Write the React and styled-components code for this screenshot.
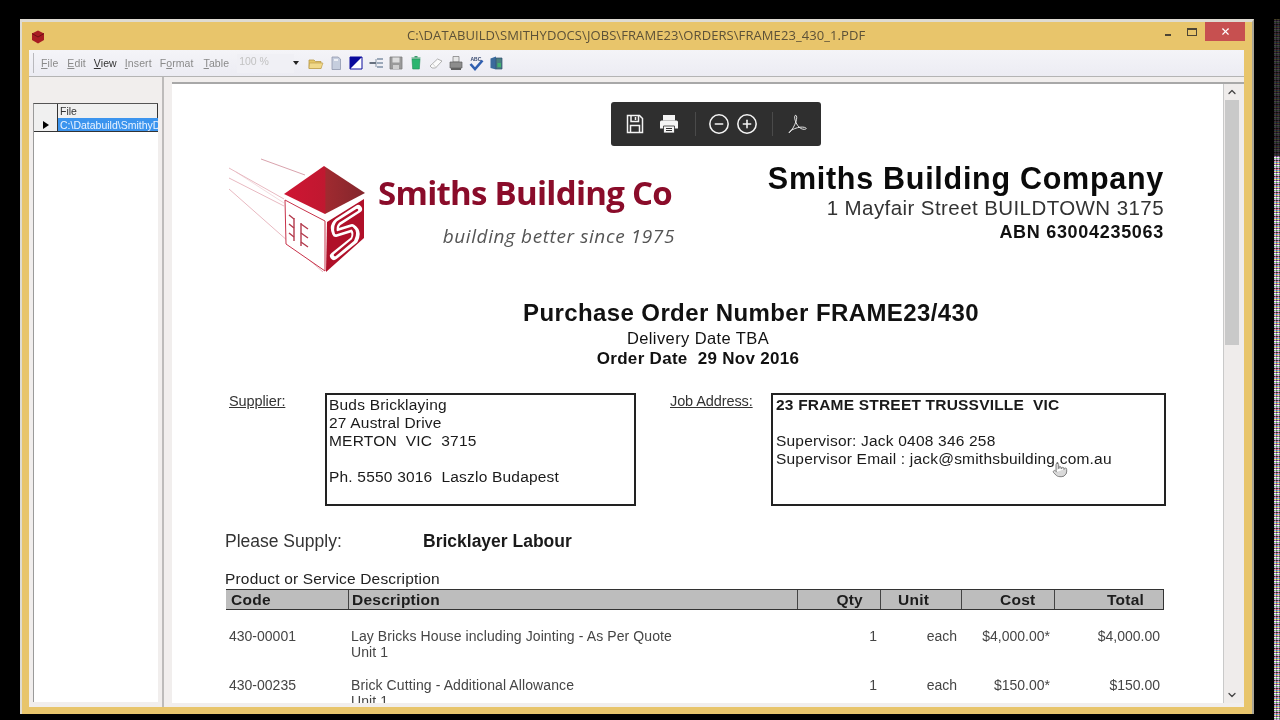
import React from "react";
import styled, { createGlobalStyle } from "styled-components";
import { CircleMinus, CirclePlus, Pointer, ChevronUp, ChevronDown, X } from "lucide-react";

const Global = createGlobalStyle`
  html, body { margin: 0; padding: 0; background: #000; }
  body { font-family: "Liberation Sans", Arial, sans-serif; overflow: hidden; }
  * { box-sizing: border-box; }
`;

const Screen = styled.div`
  width: 1280px;
  height: 720px;
  background: #000;
  display: flex;
  padding-top: 19px;
  overflow: hidden;
`;

const Window = styled.div`
  margin-left: 20px;
  width: 1234px;
  height: 695px;
  border-top: 3px solid #dedbd2;
  border-left: 2px solid #dedbd2;
  border-right: 2px solid #a9a596;
  background: #e8c56b;
  display: flex;
  flex-direction: column;
  padding: 0 8px 7px 7px;
  filter: blur(0.3px);
`;

const Noise = styled.div`
  margin-left: 20px;
  width: 6px;
  height: 701px;
  background-color: #555;
  background-image:
    linear-gradient(180deg, rgba(0, 0, 0, 0.72) 0 137px, transparent 137px),
    repeating-linear-gradient(90deg, transparent 0 1px, rgba(255, 255, 255, 0.35) 1px 2px, rgba(0, 0, 0, 0.3) 2px 3px),
    repeating-linear-gradient(0deg, #d8a0e8 0 1px, #6fbf72 1px 2px, #f2f2f2 2px 3px, #7c3f99 3px 4px, #e8d26a 4px 5px, #5fa8d8 5px 6px, #ee7f9c 6px 7px, #3c3c3c 7px 8px);
`;

const TitleBar = styled.div`
  height: 28px;
  display: flex;
  align-items: center;
  position: relative;
  margin-right: -1px;
`;

const AppIcon = styled.svg`
  width: 14px;
  height: 14px;
  margin-left: 2px;
  margin-top: 1px;
`;

const TitleText = styled.div`
  position: absolute;
  left: 378px;
  top: 5px;
  font-family: "Open Sans", sans-serif;
  font-size: 13px;
  line-height: 17px;
  letter-spacing: 0.08px;
  color: #5c5138;
  white-space: nowrap;
`;

const Controls = styled.div`
  margin-left: auto;
  align-self: flex-start;
  display: flex;
  align-items: flex-start;
`;

const MinButton = styled.div`
  width: 6px;
  height: 2px;
  margin-top: 12px;
  background: #4d4534;
`;

const MaxButton = styled.div`
  width: 10px;
  height: 8px;
  margin: 6px 8px 0 16px;
  border: 1px solid #4d4534;
  border-top-width: 2px;
`;

const CloseButton = styled.div`
  width: 40px;
  height: 19px;
  background: #c75050;
  color: #fff;
  display: flex;
  align-items: center;
  justify-content: center;
`;

const Client = styled.div`
  flex: 1;
  min-height: 0;
  display: flex;
  flex-direction: column;
  background: #f1eeed;
`;

const Toolbar = styled.div`
  height: 27px;
  flex: none;
  display: flex;
  align-items: center;
  padding-left: 4px;
  background: linear-gradient(180deg, #f4f4f8, #ececf3);
  border-bottom: 1px solid #b4b4b4;
`;

const Grip = styled.div`
  width: 1px;
  height: 20px;
  background: #b9b9bd;
  margin-right: 7px;
`;

const Menu = styled.span`
  font-size: 10.5px;
  color: ${(p) => (p.$active ? "#333" : "#8a8a8a")};
  margin-right: ${(p) => p.$gap}px;
  letter-spacing: 0.1px;
  white-space: nowrap;
  u { text-underline-offset: 1px; }
`;

const ZoomBox = styled.div`
  width: 57px;
  font-size: 10.5px;
  color: #c2c2c2;
  background: #f0f0f5;
  height: 19px;
  line-height: 15px;
  margin-left: -1px;
  padding-left: 2px;
  margin-right: -1px;
`;

const Caret = styled.div`
  width: 0;
  height: 0;
  margin: 0 9px 0 0;
  border: 3.5px solid transparent;
  border-top: 4px solid #222;
  border-bottom: 0;
`;

const ToolIcons = styled.div`
  display: flex;
  align-items: center;
  gap: 4px;
`;

const ToolSvg = styled.svg`
  width: 16px;
  height: 16px;
  flex: none;
`;

const Main = styled.div`
  flex: 1;
  min-height: 0;
  display: flex;
`;

const Side = styled.aside`
  width: 135px;
  flex: none;
  padding: 26px 4px 5px 4px;
  border-right: 2px solid #bdbbba;
  display: flex;
`;

const FileGrid = styled.div`
  flex: 1;
  background: #fff;
  border-left: 1px solid #9a9a9a;
  border-top: 1px solid #555;
  overflow: hidden;
`;

const GridRow = styled.div`
  display: grid;
  grid-template-columns: 24px 1fr;
  height: ${(p) => p.$h}px;
  border-bottom: 1px solid #333;
  font-size: 10.5px;
  line-height: 14px;
`;

const HeadCell = styled.div`
  background: #f0f0f0;
  border-right: 1px solid #333;
  color: #333;
  padding-left: 2px;
`;

const ArrowCell = styled.div`
  background: #f0f0f0;
  border-right: 1px solid #333;
  display: flex;
  align-items: center;
  justify-content: center;
  &::before {
    content: "";
    border-left: 6px solid #000;
    border-top: 4.5px solid transparent;
    border-bottom: 4.5px solid transparent;
  }
`;

const SelectedCell = styled.div`
  background: #3b94ee;
  color: #eaf3ff;
  padding-left: 2px;
  white-space: nowrap;
  overflow: hidden;
`;

const DocPane = styled.div`
  flex: 1;
  min-width: 0;
  padding: 5px 0 4px 8px;
  display: flex;
`;

const DocFrame = styled.div`
  flex: 1;
  min-width: 0;
  display: flex;
  border-top: 2px solid #a8a8a8;
  position: relative;
  overflow: hidden;
`;

const Sheet = styled.div`
  flex: 1;
  background: #fff;
  border-right: 1px solid #c9c9c9;
  overflow: hidden;
  padding: 72px 0 0 53px;
  color: #111;
`;

const Scroll = styled.div`
  width: 20px;
  flex: none;
  background: #efeceb;
  display: flex;
  flex-direction: column;
  align-items: center;
  color: #444;
  padding-right: 4px;
`;

const ScrollThumb = styled.div`
  width: 14px;
  height: 245px;
  margin-top: 2px;
  background: #c9c9c9;
`;

const ScrollEnd = styled.div`
  margin-top: auto;
  margin-bottom: 2px;
  display: flex;
`;

const ScrollStart = styled.div`
  height: 12px;
  margin-top: 2px;
  display: flex;
`;

const Float = styled.div`
  position: absolute;
  left: 439px;
  top: 18px;
  width: 210px;
  height: 44px;
  background: #2f2f2f;
  border-radius: 3px;
  color: #f4f4f4;
  display: flex;
  align-items: center;
  padding-left: 14px;
`;

const FloatSep = styled.div`
  width: 1px;
  height: 24px;
  background: #4a4a4a;
  margin: 0 ${(p) => p.$right}px 0 ${(p) => p.$left}px;
`;

const FloatSvg = styled.svg`
  width: 20px;
  height: 20px;
  flex: none;
  margin-right: ${(p) => p.$gap || 0}px;
`;

const ZoomSvg = styled.svg`
  width: 22px;
  height: 22px;
  flex: none;
  margin-right: ${(p) => p.$gap || 0}px;
`;

const Cursor = styled.div`
  position: absolute;
  left: 880px;
  top: 378px;
  color: #6e6e6e;
  opacity: 0.85;
  display: flex;
`;

const Header = styled.header`
  width: 940px;
  display: flex;
  justify-content: space-between;
  height: 117px;
`;

const Brand = styled.div`
  display: flex;
  padding-left: 3px;
`;

const LogoMark = styled.svg`
  width: 142px;
  height: 118px;
  flex: none;
`;

const BrandText = styled.div`
  margin-left: 8px;
`;

const BrandName = styled.div`
  font-family: "Open Sans", sans-serif;
  font-weight: 700;
  font-size: 33px;
  line-height: 40px;
  margin-top: 17px;
  letter-spacing: -0.72px;
  color: #8a0c2a;
  white-space: nowrap;
`;

const Tagline = styled.div`
  font-family: "Open Sans", sans-serif;
  font-style: italic;
  font-size: 19px;
  line-height: 26px;
  margin: 10px -3px 0 0;
  text-align: right;
  letter-spacing: 0.6px;
  color: #555;
  white-space: nowrap;
`;

const Company = styled.div`
  text-align: right;
  padding-top: 4px;
  padding-right: 1px;
`;

const CompanyName = styled.div`
  font-size: 30.5px;
  font-weight: 700;
  line-height: 36px;
  letter-spacing: 0.72px;
  color: #0a0a0a;
`;

const CompanyAddress = styled.div`
  font-size: 20.5px;
  line-height: 24px;
  letter-spacing: 0.42px;
  color: #333;
`;

const CompanyAbn = styled.div`
  font-size: 18px;
  font-weight: 700;
  line-height: 24px;
  letter-spacing: 0.7px;
  color: #111;
`;

const CenterBlock = styled.div`
  width: 940px;
  text-align: center;
  padding-left: ${(p) => p.$shift}px;
  font-size: ${(p) => p.$size}px;
  font-weight: ${(p) => (p.$bold ? 700 : 400)};
  line-height: ${(p) => p.$line}px;
  margin-top: ${(p) => p.$top || 0}px;
  letter-spacing: ${(p) => p.$track || 0}px;
  white-space: pre;
`;

const Addresses = styled.section`
  display: grid;
  grid-template-columns: 100px 311px 135px 395px;
  margin-top: 24px;
`;

const AddrLabel = styled.div`
  padding: 0 0 0 ${(p) => p.$pad}px;
  font-size: 14.5px;
  line-height: 16px;
  text-decoration: underline;
  color: #333;
  letter-spacing: -0.1px;
`;

const AddrBox = styled.div`
  height: 113px;
  border: 2px solid #222;
  padding: 1px 0 0 ${(p) => p.$pad}px;
  font-size: 15.5px;
  line-height: 18px;
  white-space: pre;
  color: #1a1a1a;
  letter-spacing: 0.2px;
`;

const Supply = styled.div`
  display: grid;
  grid-template-columns: 198px 1fr;
  margin-top: 24px;
  font-size: 17.5px;
  line-height: 22px;
  color: #333;
  b { color: #1a1a1a; }
`;

const TableCaption = styled.div`
  margin-top: 18px;
  font-size: 15.5px;
  line-height: 18px;
  letter-spacing: 0.18px;
  color: #222;
`;

const Columns = `
  display: grid;
  grid-template-columns: 122px 449px 83px 81px 93px 110px;
  width: 938px;
  margin-left: 1px;
`;

const TableHead = styled.div`
  ${Columns}
  margin-top: 1px;
  height: 21px;
  background: #bdbdbd;
  border-top: 1px solid #333;
  border-bottom: 1px solid #333;
  border-right: 1px solid #333;
`;

const Th = styled.div`
  font-size: 15.5px;
  font-weight: 700;
  line-height: 19px;
  color: #1d1d1d;
  letter-spacing: 0.25px;
  text-align: ${(p) => p.$align || "left"};
  padding: 0 ${(p) => p.$right || 0}px 0 ${(p) => p.$left || 0}px;
  border-left: ${(p) => (p.$first ? "none" : "1px solid #444")};
`;

const TableBody = styled.div`
  padding-top: 18px;
`;

const Row = styled.div`
  ${Columns}
  padding-bottom: 17px;
`;

const Td = styled.div`
  font-size: 14px;
  line-height: 16px;
  color: #454545;
  white-space: pre;
  letter-spacing: ${(p) => p.$track || 0}px;
  text-align: ${(p) => p.$align || "left"};
  padding: 0 ${(p) => p.$right || 0}px 0 ${(p) => p.$left || 0}px;
`;

const rows = [
  { code: "430-00001", desc: "Lay Bricks House including Jointing - As Per Quote\nUnit 1", qty: "1", unit: "each", cost: "$4,000.00*", total: "$4,000.00" },
  { code: "430-00235", desc: "Brick Cutting - Additional Allowance\nUnit 1", qty: "1", unit: "each", cost: "$150.00*", total: "$150.00" },
];

const Logo = () => (
  <LogoMark viewBox="0 0 142 118">
    <defs>
      <linearGradient id="roof" x1="0" x2="1" y1="0" y2="0">
        <stop offset="0" stopColor="#cf1533" />
        <stop offset="0.5" stopColor="#c01830" />
        <stop offset="0.52" stopColor="#a02a30" />
        <stop offset="1" stopColor="#82262c" />
      </linearGradient>
    </defs>
    <g stroke="#e8b9c1" strokeWidth="1" fill="none">
      <path d="M1 12 L56 43" />
      <path d="M1 22 L56 50" />
      <path d="M1 33 L95 116" />
      <path d="M33 3 L77 19" stroke="#d9a3ad" />
      <path d="M8 16 L56 47" opacity="0.5" />
    </g>
    <path d="M96 10 L137 37 L97 58 L56 38 Z" fill="url(#roof)" />
    <path d="M57 44 L72 52 L97 65 L97 115 L58 88 Z" fill="#fff" stroke="#c8324a" strokeWidth="1" />
    <g stroke="#b33a4c" strokeWidth="1.4" fill="none">
      <path d="M73 67 L73 90" />
      <path d="M66 62 L66 85" />
      <path d="M73 68 L80 73 M73 77 L80 82 M73 86 L80 91" />
      <path d="M66 63 L61 59 M66 72 L61 68 M66 81 L61 77" />
    </g>
    <path d="M99 66 L136 43 L136 82 L98 116 Z" fill="#b01029" />
    <path d="M130 53 L110 66 Q105 70 108 77 L124 72 Q130 76 126 84 L106 100" fill="none" stroke="#fff" strokeWidth="8" strokeLinecap="round" strokeLinejoin="round" />
    <path d="M129 54 L110 66 Q106 70 108 77 L124 72 Q129 76 125 84 L107 99" fill="none" stroke="#b01029" strokeWidth="2.5" strokeLinecap="round" strokeLinejoin="round" />
  </LogoMark>
);

const Acrobat = () => (
  <FloatSvg viewBox="0 0 24 24" fill="none" stroke="currentColor" strokeWidth="1.1" strokeLinejoin="round">
    <path d="M2.500 22.500 C6 20 9 14 10.800 9 C12 5.500 12 2 10.500 1.500 C9 1.500 8.800 4 9.800 7.500 C11 12 14 16 17 17.500 C19.500 18.700 22.800 18.800 23 17.500 C23 16 19.500 15.500 16 15.800 C11.500 16.300 6 18.500 3.500 20.800 C2.500 21.700 2.200 22.600 2.500 22.500 Z" />
  </FloatSvg>
);

const FloppyLine = () => (
  <FloatSvg viewBox="0 0 20 20" fill="none" stroke="currentColor" strokeWidth="1.500" $gap={14}>
    <path d="M2.500 1.500 H14.500 L17.500 4.500 V18.500 H2.500 Z" />
    <path d="M6 1.500 V7.500 H13.500 V1.500" />
    <path d="M5.500 18.500 V11.500 H14.500 V18.500" />
    <path d="M10.500 3 V6" />
  </FloatSvg>
);

const PrinterSolid = () => (
  <FloatSvg viewBox="0 0 20 20">
    <path d="M4 1 H16 V6.500 H4 Z" fill="currentColor" />
    <path d="M2.500 6.500 H17.500 Q19 6.500 19 8 V14.500 H1 V8 Q1 6.500 2.500 6.500 Z" fill="currentColor" />
    <path d="M4.500 12 H15.500 V19 H4.500 Z" fill="currentColor" stroke="#2f2f2f" strokeWidth="0.8" />
    <path d="M7 14.500 H13 M7 16.500 H13" stroke="#2f2f2f" strokeWidth="1" />
  </FloatSvg>
);

const TB = ({ children }) => <ToolSvg viewBox="0 0 16 16">{children}</ToolSvg>;

const ToolSet = () => (
  <ToolIcons>
    <TB>
      <path d="M1 5 H6 L7.500 6.500 H13 V13.500 H1 Z" fill="#e6c766" stroke="#b8994a" strokeWidth="0.8" />
      <path d="M1.500 8 H15 L13 13.500 H1 Z" fill="#f1d98a" stroke="#b8994a" strokeWidth="0.6" />
    </TB>
    <TB>
      <path d="M4 2 H10 L12.500 4 V14.500 H4 Z" fill="#c6cede" stroke="#8f98ad" strokeWidth="0.8" />
      <path d="M6 4 H10 V6 H6 Z" fill="#eef0f6" />
    </TB>
    <TB>
      <path d="M2 2 H14 V14 H2 Z" fill="#fff" stroke="#0a0a9c" strokeWidth="1" />
      <path d="M2 2 H14 L2 14 Z" fill="#0a0a9c" />
    </TB>
    <TB>
      <path d="M1.500 8 H8 M4 8 H8" stroke="#3a4658" strokeWidth="1.400" />
      <path d="M9 4 H15 M9 8 H15 M9 12 H15" stroke="#8091a6" strokeWidth="1.300" />
      <path d="M8 4 V12" stroke="#6d7e90" strokeWidth="0.8" />
    </TB>
    <TB>
      <path d="M2 2 H14 V14 H2 Z" fill="#9a9a9a" stroke="#7d7d7d" strokeWidth="0.8" />
      <path d="M4.500 2.500 H11.500 V7.500 H4.500 Z" fill="#dedede" />
      <path d="M5 10 H11 V14 H5 Z" fill="#cfcfcf" />
    </TB>
    <TB>
      <path d="M4 4 H12 L11.300 14 H4.700 Z" fill="#2bb56f" stroke="#1e8d55" strokeWidth="0.6" />
      <path d="M3.500 3 H12.500 M6.500 1.700 H9.500" stroke="#3a9c6b" strokeWidth="1.200" />
    </TB>
    <TB>
      <path d="M2 11 L9.500 4 L14 6 L7.500 13 H4 Z" fill="#fbfbfb" stroke="#a8a8a8" strokeWidth="0.9" />
      <path d="M4.500 8.500 L8 12.500" stroke="#c4c4c4" strokeWidth="0.7" />
    </TB>
    <TB>
      <path d="M5 1.500 H11 V7 H5 Z" fill="#e7e7e7" stroke="#777" strokeWidth="0.7" />
      <path d="M2 7 H14 V13 H2 Z" fill="#8d8d8d" stroke="#5e5e5e" strokeWidth="0.7" />
      <path d="M3 13 H13 V15 H3 Z" fill="#606060" />
    </TB>
    <TB>
      <text x="2.500" y="5.500" fontSize="5" fontWeight="700" fill="#384a70" fontFamily="Liberation Sans">ABC</text>
      <path d="M2.500 9 L7 14 L14.500 5.500" fill="none" stroke="#2f5fb0" strokeWidth="2.600" />
    </TB>
    <TB>
      <path d="M2.500 3.500 L8 1.500 V14.500 L2.500 13 Z" fill="#3a6a9c" />
      <path d="M8 3 H14 V14 H8 Z" fill="#4a7f80" stroke="#2e4f70" strokeWidth="0.7" />
      <path d="M9.500 8 H13 V12 H9.500 Z" fill="#41b070" />
    </TB>
  </ToolIcons>
);

export default function App() {
  return (
    <Screen>
      <Global />
      <Window>
        <TitleBar>
          <AppIcon viewBox="0 0 14 14">
            <path d="M7 0.500 L13 3.500 V10 L7 13.500 L1 10 V3.500 Z" fill="#a81c22" />
            <path d="M1 3.500 L7 7 L13 3.500" fill="none" stroke="#6e0f14" strokeWidth="1" />
          </AppIcon>
          <TitleText>C:\DATABUILD\SMITHYDOCS\JOBS\FRAME23\ORDERS\FRAME23_430_1.PDF</TitleText>
          <Controls>
            <MinButton />
            <MaxButton />
            <CloseButton>
              <X size={11} strokeWidth={2.5} />
            </CloseButton>
          </Controls>
        </TitleBar>
        <Client>
          <Toolbar>
            <Grip />
            <Menu $gap={9}><u>F</u>ile</Menu>
            <Menu $gap={8}><u>E</u>dit</Menu>
            <Menu $gap={8} $active><u>V</u>iew</Menu>
            <Menu $gap={8}><u>I</u>nsert</Menu>
            <Menu $gap={10}>F<u>o</u>rmat</Menu>
            <Menu $gap={9}><u>T</u>able</Menu>
            <ZoomBox>100 %</ZoomBox>
            <Caret />
            <ToolSet />
          </Toolbar>
          <Main>
            <Side>
              <FileGrid>
                <GridRow $h={14}>
                  <HeadCell />
                  <HeadCell>File</HeadCell>
                </GridRow>
                <GridRow $h={14}>
                  <ArrowCell />
                  <SelectedCell>C:\Databuild\SmithyDOCS</SelectedCell>
                </GridRow>
              </FileGrid>
            </Side>
            <DocPane>
              <DocFrame>
                <Sheet>
                  <Header>
                    <Brand>
                      <Logo />
                      <BrandText>
                        <BrandName>Smiths Building Co</BrandName>
                        <Tagline>building better since 1975</Tagline>
                      </BrandText>
                    </Brand>
                    <Company>
                      <CompanyName>Smiths Building Company</CompanyName>
                      <CompanyAddress>1 Mayfair Street BUILDTOWN 3175</CompanyAddress>
                      <CompanyAbn>ABN 63004235063</CompanyAbn>
                    </Company>
                  </Header>
                  <CenterBlock $shift={112} $size={24} $line={28} $top={26} $bold $track={0.4}>
                    Purchase Order Number FRAME23/430
                  </CenterBlock>
                  <CenterBlock $shift={6} $size={16.5} $line={20} $top={1} $track={0.4}>
                    Delivery Date TBA
                  </CenterBlock>
                  <CenterBlock $shift={6} $size={17} $line={20} $top={1} $bold $track={0.3}>
                    {"Order Date  29 Nov 2016"}
                  </CenterBlock>
                  <Addresses>
                    <AddrLabel $pad={4}>Supplier:</AddrLabel>
                    <AddrBox $pad={2}>{"Buds Bricklaying\n27 Austral Drive\nMERTON  VIC  3715\n\nPh. 5550 3016  Laszlo Budapest"}</AddrBox>
                    <AddrLabel $pad={34}>Job Address:</AddrLabel>
                    <AddrBox $pad={3}>
                      <b>23 FRAME STREET TRUSSVILLE  VIC</b>
                      {"\n\nSupervisor: Jack 0408 346 258\nSupervisor Email : jack@smithsbuilding.com.au"}
                    </AddrBox>
                  </Addresses>
                  <Supply>
                    <span>Please Supply:</span>
                    <b>Bricklayer Labour</b>
                  </Supply>
                  <TableCaption>Product or Service Description</TableCaption>
                  <TableHead>
                    <Th $first $left={5}>Code</Th>
                    <Th $left={3}>Description</Th>
                    <Th $align="right" $right={17}>Qty</Th>
                    <Th $left={17}>Unit</Th>
                    <Th $left={38}>Cost</Th>
                    <Th $left={52}>Total</Th>
                  </TableHead>
                  <TableBody>
                    {rows.map((r) => (
                      <Row key={r.code}>
                        <Td $left={3}>{r.code}</Td>
                        <Td $left={3} $track={0.1}>{r.desc}</Td>
                        <Td $align="right" $right={3}>{r.qty}</Td>
                        <Td $align="right" $right={4}>{r.unit}</Td>
                        <Td $align="right" $right={4}>{r.cost}</Td>
                        <Td $align="right" $right={4}>{r.total}</Td>
                      </Row>
                    ))}
                  </TableBody>
                </Sheet>
                <Scroll>
                  <ScrollStart><ChevronUp size={12} strokeWidth={2.5} /></ScrollStart>
                  <ScrollThumb />
                  <ScrollEnd><ChevronDown size={12} strokeWidth={2.5} /></ScrollEnd>
                </Scroll>
                <Float>
                  <FloppyLine />
                  <PrinterSolid />
                  <FloatSep $left={16} $right={12} />
                  <ZoomSvg as={CircleMinus} strokeWidth={1.7} $gap={6} />
                  <ZoomSvg as={CirclePlus} strokeWidth={1.7} />
                  <FloatSep $left={14} $right={14} />
                  <Acrobat />
                </Float>
                <Cursor><Pointer size={16} fill="#d4d4d4" strokeWidth={1.5} /></Cursor>
              </DocFrame>
            </DocPane>
          </Main>
        </Client>
      </Window>
      <Noise />
    </Screen>
  );
}
